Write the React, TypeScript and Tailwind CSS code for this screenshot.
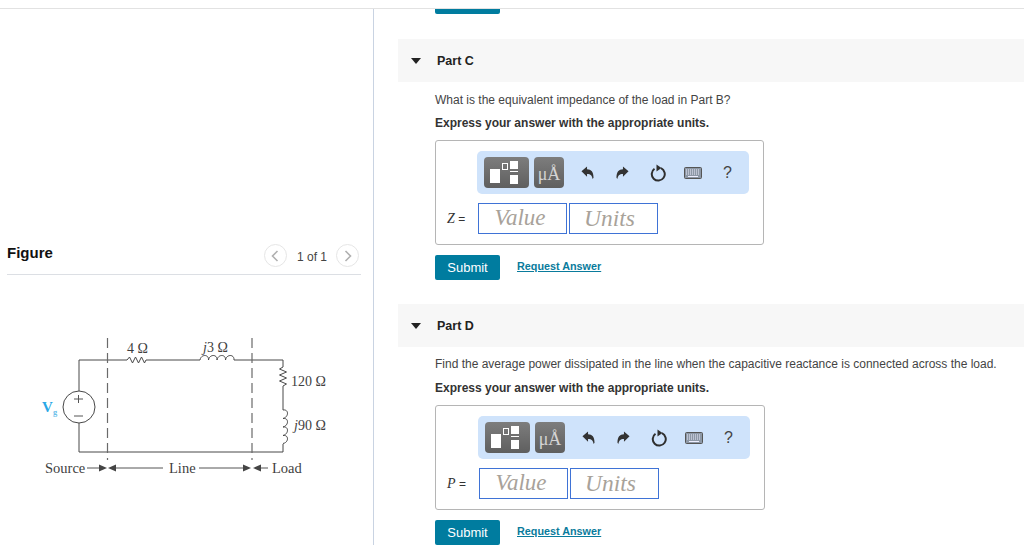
const sans = "font-['Liberation_Sans',Arial,sans-serif]";

function Circuit() {
  const serif = "'Liberation Serif', serif";
  return (
    <svg width="374" height="170" viewBox="0 0 374 170" className="block" style={{ fontFamily: serif }}>
      <g fill="none" stroke="#484848" strokeWidth="1">
        <path d="M79 71 V40 H127 M146 40 H200 M234 40 H283 V47 M283 70 V90 M283 124 V132 H79 V103" />
        <circle cx="79" cy="87" r="16" fill="#fff" />
        <path d="M127 40 l2.500 -3 l3 6 l3 -6 l3 6 l3 -6 l3 6 l1.500 -3" />
        <path d="M200 40 c1 -6 9 -6 8.500 0 c1 -6 9 -6 8.500 0 c1 -6 9 -6 8.500 0 c1 -6 9 -6 8.500 0" />
        <path d="M283 47 l-3.500 2 l7 3 l-7 3 l7 3 l-7 3 l7 3 l-3.500 2 V70" />
        <path d="M283 90 c6 -1 6 7 0 8.500 c6 -1 6 7 0 8.500 c6 -1 6 7 0 8.500 c6 -1 6 7 0 8" />
      </g>
      <g stroke="#6a6a6a" strokeWidth="1.200" strokeDasharray="10 5" fill="none">
        <path d="M107.500 18 V140" />
        <path d="M252 18 V140" />
      </g>
      <g stroke="#555" strokeWidth="1" fill="none">
        <path d="M74 79 H83 M78.500 75 V83 M74 96 H83" />
        <path d="M87 148 H101 M114 148 H163 M199 148 H244 M258 148 H268" />
      </g>
      <g fill="#444">
        <path d="M107 148 l-8 -3.500 v7 z" />
        <path d="M108 148 l8 -3.500 v7 z" />
        <path d="M251 148 l-8 -3.500 v7 z" />
        <path d="M253 148 l8 -3.500 v7 z" />
      </g>
      <g fill="#3f3f3f" fontSize="14">
        <text x="127" y="33">4 Ω</text>
        <text x="203" y="32"><tspan fontStyle="italic">j</tspan>3 Ω</text>
        <text x="291" y="66">120 Ω</text>
        <text x="294" y="110"><tspan fontStyle="italic">j</tspan>90 Ω</text>
      </g>
      <g fill="#3f3f3f" fontSize="14.500">
        <text x="45" y="153">Source</text>
        <text x="169" y="153">Line</text>
        <text x="272" y="153">Load</text>
      </g>
      <text x="42" y="92" fill="#2aa7e6" fontSize="15" fontWeight="700">V</text>
      <text x="53" y="95" fill="#6cc0ea" fontSize="8.500" fontWeight="700">g</text>
    </svg>
  );
}

function TemplateIcon() {
  return (
    <svg width="32" height="26" viewBox="0 0 32 26" className="ml-[-1px]">
      <rect x="0" y="9" width="10" height="14" fill="#fff" />
      <rect x="12.500" y="3.500" width="5" height="6" fill="none" stroke="#fff" strokeWidth="1" />
      <rect x="20" y="1" width="8" height="8" fill="#fff" />
      <rect x="20" y="11" width="8" height="1" fill="#fff" />
      <rect x="20" y="15" width="8" height="9" fill="#fff" />
    </svg>
  );
}

function Undo({ flip }: { flip?: boolean }) {
  return (
    <svg width="13" height="14" viewBox="0 0 14 15" style={flip ? { transform: "scaleX(-1)" } : undefined}>
      <path d="M0.500 5.500 L6.500 0.500 V3.500 C11 3.500 13.500 6.500 13.500 12.500 L12.500 14 C12 10.500 10.500 8.500 6.500 8.500 V11.500 Z" fill="#333" />
    </svg>
  );
}

function Reset() {
  return (
    <svg width="16" height="18" viewBox="0 0 16 18">
      <path d="M4.500 4.800 A6.500 6.500 0 1 0 11 4.200" fill="none" stroke="#2f2f2f" strokeWidth="2" />
      <path d="M6.500 0.500 L11.500 4 L6.500 7.500 Z" fill="#2f2f2f" />
    </svg>
  );
}

function KeyboardIcon() {
  return (
    <svg width="18" height="12" viewBox="0 0 18 12">
      <rect x="0.500" y="0.500" width="17" height="11" rx="1" fill="#8d98a6" stroke="#555" strokeWidth="1" />
      <path d="M2 3 H16 M2 5 H16 M2 7 H16" stroke="#eef" strokeWidth="1" strokeDasharray="1 1" />
      <path d="M4 9.500 H14" stroke="#eef" strokeWidth="1" />
    </svg>
  );
}

function Part({
  title,
  question,
  label,
  questionTop,
  expressTop,
  labelBox,
  pad,
  boxWidth,
}: {
  title: string;
  question: string;
  label: string;
  questionTop: string;
  expressTop: string;
  labelBox: string;
  pad: string;
  boxWidth: string;
}) {
  return (
    <div>
      <div className="h-[43px] ml-[24px] bg-[#f7f7f7] flex items-center">
        <div className="ml-[13px] w-0 h-0 border-x-[5px] border-x-transparent border-t-[6px] border-t-[#222]" />
        <span className="ml-[16px] pt-[2px] text-[12.500px] font-bold text-[#222]">{title}</span>
      </div>
      <div className="ml-[61px]">
        <p className={`h-[14px] leading-[14px] text-[12px] text-[#444] whitespace-nowrap ${questionTop}`}>{question}</p>
        <p className={`h-[14px] leading-[14px] text-[12px] font-bold text-[#333] ${expressTop}`}>Express your answer with the appropriate units.</p>
        <div className={`mt-[10px] h-[105px] border border-[#b5b5b5] rounded-[3px] ${boxWidth} ${pad}`}>
          <div className="ml-[41px] mt-[10px] w-[272px] h-[43px] bg-[#cfe3fb] rounded-[5px] flex items-center">
            <div className="ml-[7px] w-[45px] h-[31px] rounded-[4px] bg-gradient-to-b from-[#7d7d7d] to-[#5f5f5f] flex items-center justify-center">
              <TemplateIcon />
            </div>
            <div className="ml-[5px] w-[30px] h-[31px] rounded-[4px] bg-gradient-to-b from-[#7d7d7d] to-[#5f5f5f] flex items-end justify-center pb-[5px] text-[#d4d4d4] text-[18px] leading-[18px] font-['Liberation_Serif',serif]">
              μÅ
            </div>
            <div className="ml-[17px]"><Undo /></div>
            <div className="ml-[22px]"><Undo flip /></div>
            <div className="ml-[21px]"><Reset /></div>
            <div className="ml-[18px]"><KeyboardIcon /></div>
            <span className="ml-[21px] text-[16px] text-[#444]">?</span>
          </div>
          <div className="mt-[9px] flex items-center">
            <span className={`text-[12px] text-[#333] whitespace-nowrap ${labelBox}`}>
              <i className="font-['Liberation_Serif',serif] text-[14px]">{label}</i> =
            </span>
            <div className="w-[89px] h-[31px] pr-[5px] border border-[#3f73d6] text-center text-[#a8a29a] text-[23px] leading-[28px] italic font-['Liberation_Serif',serif]">Value</div>
            <div className="ml-[2px] w-[89px] h-[31px] pr-[8px] border border-[#3f73d6] text-center text-[#a8a29a] text-[23.500px] leading-[28px] italic font-['Liberation_Serif',serif]">Units</div>
          </div>
        </div>
        <div className="mt-[10px] flex items-start">
          <button className="w-[65px] h-[25px] bg-[#007c9f] rounded-[2px] text-white text-[13px]">Submit</button>
          <a className="ml-[17px] mt-[3px] text-[10.800px] font-bold text-[#0a7b9c] underline">Request Answer</a>
        </div>
      </div>
    </div>
  );
}

export default function App() {
  return (
    <div className={`w-[1024px] h-[545px] overflow-hidden bg-white ${sans}`}>
      <div className="h-[9px] border-b border-[#e2e2e2]" />
      <div className="flex h-[536px]">
        <div className="w-[374px] shrink-0 border-r border-[#c9d3e2]">
          <div className="mt-[225px] ml-[7px] mr-[12px] h-[41px] border-b border-[#dcdfe4] flex items-start justify-between">
            <span className="mt-[9px] text-[15px] leading-[20px] font-bold text-[#111]">Figure</span>
            <div className="mt-[10px] mr-[2px] flex items-center text-[12px] text-[#444]">
              <div className="w-[23px] h-[23px] rounded-full border border-[#e6e6e6] flex items-center justify-center">
                <svg width="8" height="12" viewBox="0 0 8 12"><path d="M6.500 1 L1.500 6 L6.500 11" fill="none" stroke="#b0b0b0" strokeWidth="1.600" /></svg>
              </div>
              <span className="ml-[10px] mr-[9px] mt-[3px]">1 of 1</span>
              <div className="w-[23px] h-[23px] rounded-full border border-[#e6e6e6] flex items-center justify-center">
                <svg width="8" height="12" viewBox="0 0 8 12"><path d="M1.500 1 L6.500 6 L1.500 11" fill="none" stroke="#b0b0b0" strokeWidth="1.600" /></svg>
              </div>
            </div>
          </div>
          <div className="mt-[45px]">
            <Circuit />
          </div>
        </div>
        <div className="flex-1 min-w-0">
          <div className="ml-[61px] w-[65px] h-[5px] bg-[#007c9f] rounded-b-[2px]" />
          <div className="mt-[25px]">
            <Part
              title="Part C"
              question="What is the equivalent impedance of the load in Part B?"
              label="Z"
              questionTop="mt-[11px]"
              expressTop="mt-[9px]"
              labelBox="ml-[11px] w-[31px]"
              pad=""
              boxWidth="w-[329px]"
            />
          </div>
          <div className="mt-[24px]">
            <Part
              title="Part D"
              question="Find the average power dissipated in the line when the capacitive reactance is connected across the load."
              label="P"
              questionTop="mt-[10px]"
              expressTop="mt-[10px]"
              labelBox="ml-[10px] w-[32px]"
              pad="pl-px"
              boxWidth="w-[330px]"
            />
          </div>
        </div>
      </div>
    </div>
  );
}
